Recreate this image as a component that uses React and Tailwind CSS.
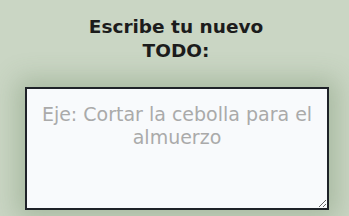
import React, { useState } from 'react';

const App = () => {
  const [todo, setTodo] = useState('');

  return (
    <div className="min-h-screen w-full bg-[#cad6c4] flex flex-col items-center pt-[15px] font-['DejaVu_Sans',sans-serif]">
      <h1 className="ml-[3px] max-w-[230px] text-center text-[18.5px] leading-[24px] font-bold text-[#1c1c1c]">
        Escribe tu nuevo TODO:
      </h1>

      <textarea
        value={todo}
        onChange={(e) => setTodo(e.target.value)}
        placeholder="Eje: Cortar la cebolla para el almuerzo"
        className="mt-[24px] ml-[5px] w-[304px] h-[123px] bg-[#f8fafc] border-2 border-[#1e2228] px-[8px] pt-[14px] pb-[8px] text-center text-[19px] leading-[23px] text-[#333] placeholder:text-[#aaa] shadow-[0_0_24px_8px_rgba(80,110,70,0.28)] outline-none font-['DejaVu_Sans',sans-serif]"
      />
    </div>
  );
};

export default App;
